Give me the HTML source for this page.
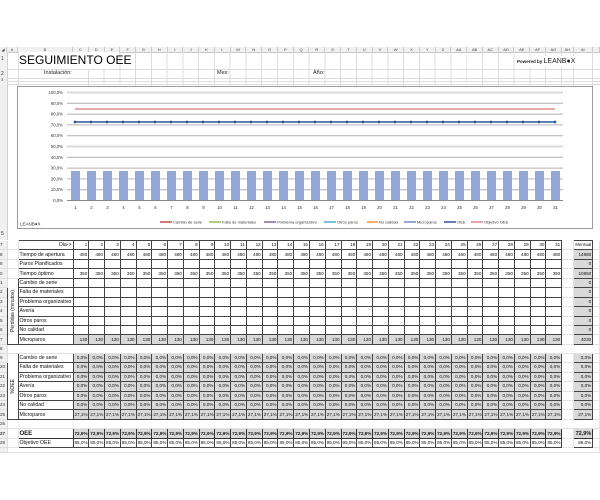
<!DOCTYPE html>
<html><head><meta charset="utf-8">
<style>
body{margin:0;width:600px;height:500px;position:relative;background:#fff;font-family:"Liberation Sans",sans-serif;overflow:hidden}
.abs{position:absolute}
.hdr{position:absolute;top:47px;left:0;width:600px;height:5px;background:#f0f0f0;border-bottom:1px solid #c8c8c8;font-size:4px;line-height:5px;color:#444;display:flex}
.hdr span{text-align:center;border-right:1px solid #c8c8c8;box-sizing:border-box;overflow:hidden}
table{position:absolute;left:0;top:240px;border-collapse:collapse;table-layout:fixed;width:600px}
td{padding:0 1px;font-size:4.6px;text-align:right;overflow:hidden;white-space:nowrap;line-height:8px;vertical-align:middle;border:1px solid #444;color:#111;box-sizing:border-box}
tr{height:9.45px}
td.n{border:none;border-bottom:1px solid #ddd;border-right:1px solid #ddd;background:#f0f0f0;font-size:4.5px;text-align:left;color:#333;padding:0}
td.e{border:none;border-bottom:1px solid #e2e2e2;border-right:1px solid #e2e2e2}
td.l{text-align:left;font-size:5.2px;border-right:1px solid #444}
td.g{background:#d9d9d9}
tr.t td.v{border:1.5px solid #333}
.vert{writing-mode:vertical-rl;transform:rotate(180deg);font-size:5px;text-align:center;margin:auto}
</style></head><body>

<div class="hdr">
<span style="width:7px">◢</span><span style="width:11px">A</span><span style="width:55px">B</span>
<span style="width:15.77px">C</span><span style="width:15.77px">D</span><span style="width:15.77px">E</span><span style="width:15.77px">F</span><span style="width:15.77px">G</span><span style="width:15.77px">H</span><span style="width:15.77px">I</span><span style="width:15.77px">J</span><span style="width:15.77px">K</span><span style="width:15.77px">L</span><span style="width:15.77px">M</span><span style="width:15.77px">N</span><span style="width:15.77px">O</span><span style="width:15.77px">P</span><span style="width:15.77px">Q</span><span style="width:15.77px">R</span><span style="width:15.77px">S</span><span style="width:15.77px">T</span><span style="width:15.77px">U</span><span style="width:15.77px">V</span><span style="width:15.77px">W</span><span style="width:15.77px">X</span><span style="width:15.77px">Y</span><span style="width:15.77px">Z</span><span style="width:15.77px">AA</span><span style="width:15.77px">AB</span><span style="width:15.77px">AC</span><span style="width:15.77px">AD</span><span style="width:15.77px">AE</span><span style="width:15.77px">AF</span><span style="width:15.77px">AG</span><span style="width:12px">AH</span><span style="width:19px">AI</span><span style="width:7px"></span>
</div>

<div class="abs" style="left:0;top:52px;width:7px;height:188px;background:#f0f0f0;border-right:1px solid #d0d0d0"></div>
<div class="abs" style="left:73px;top:52px;width:489px;height:34px;background:repeating-linear-gradient(to right,transparent 0 14.77px,#dcdcdc 14.77px 15.77px)"></div>
<div class="abs" style="left:18px;top:52px;width:1px;height:34px;background:#dcdcdc"></div>
<div class="abs" style="left:573px;top:52px;width:1px;height:34px;background:#dcdcdc"></div>
<div class="abs" style="left:592px;top:52px;width:1px;height:34px;background:#dcdcdc"></div>
<div class="abs" style="left:7px;top:69px;width:593px;height:1px;background:#dcdcdc"></div>
<div class="abs" style="left:7px;top:78px;width:593px;height:1px;background:#dcdcdc"></div>
<div class="abs" style="left:7px;top:81px;width:593px;height:1px;background:#dcdcdc"></div>
<div class="abs" style="left:7px;top:84px;width:593px;height:1px;background:#dcdcdc"></div>
<div class="abs" style="left:1px;top:56px;font-size:5px;color:#333">1</div>
<div class="abs" style="left:1px;top:71px;font-size:5px;color:#333">2</div>
<div class="abs" style="left:1px;top:77px;font-size:4px;color:#333">3</div>
<div class="abs" style="left:1px;top:231px;font-size:5px;color:#333">5</div>

<div class="abs" style="left:19px;top:52px;width:100px;height:17px;background:#fff;font-size:12px;line-height:17px;color:#000;white-space:nowrap">SEGUIMIENTO OEE</div>
<div class="abs" style="left:44px;top:70px;font-size:5.5px;color:#222">Instalación:</div>
<div class="abs" style="left:217px;top:70px;font-size:5.5px;color:#222">Mes:</div>
<div class="abs" style="left:313px;top:70px;font-size:5.5px;color:#222">Año:</div>
<div class="abs" style="left:517px;top:56px;width:64px;height:11px;background:#fff;font-size:4.5px;font-weight:bold;line-height:11px;color:#222;white-space:nowrap">Powered by <span style="font-size:7px;font-weight:normal;color:#222">LEANB●X</span></div>

<svg class="abs" style="left:0;top:0" width="600" height="240" viewBox="0 0 600 240">
<rect x="17.5" y="86.5" width="575" height="142" fill="#fff" stroke="#9a9a9a"/>
<g stroke-width="1">
<line x1="67" x2="563" y1="92.5" y2="92.5" stroke="#d9d9d9" stroke-width="2"/>
<line x1="67" x2="563" y1="103.3" y2="103.3" stroke="#b0b0b0"/>
<line x1="67" x2="563" y1="114.1" y2="114.1" stroke="#b0b0b0"/>
<line x1="67" x2="563" y1="124.9" y2="124.9" stroke="#b0b0b0"/>
<line x1="67" x2="563" y1="135.7" y2="135.7" stroke="#b0b0b0"/>
<line x1="67" x2="563" y1="146.5" y2="146.5" stroke="#d9d9d9" stroke-width="2"/>
<line x1="67" x2="563" y1="157.3" y2="157.3" stroke="#b0b0b0"/>
<line x1="67" x2="563" y1="168.1" y2="168.1" stroke="#b0b0b0"/>
<line x1="67" x2="563" y1="178.9" y2="178.9" stroke="#d9d9d9" stroke-width="2"/>
<line x1="67" x2="563" y1="189.7" y2="189.7" stroke="#b0b0b0"/>
</g>
<g fill="#93a9d4">
<rect x="71" y="171" width="9" height="29.5"/><rect x="87" y="171" width="9" height="29.5"/><rect x="103" y="171" width="9" height="29.5"/><rect x="119" y="171" width="9" height="29.5"/><rect x="135" y="171" width="9" height="29.5"/><rect x="151" y="171" width="9" height="29.5"/><rect x="167" y="171" width="9" height="29.5"/><rect x="183" y="171" width="9" height="29.5"/><rect x="199" y="171" width="9" height="29.5"/><rect x="215" y="171" width="9" height="29.5"/><rect x="231" y="171" width="9" height="29.5"/><rect x="247" y="171" width="9" height="29.5"/><rect x="263" y="171" width="9" height="29.5"/><rect x="279" y="171" width="9" height="29.5"/><rect x="295" y="171" width="9" height="29.5"/><rect x="311" y="171" width="9" height="29.5"/><rect x="327" y="171" width="9" height="29.5"/><rect x="343" y="171" width="9" height="29.5"/><rect x="359" y="171" width="9" height="29.5"/><rect x="375" y="171" width="9" height="29.5"/><rect x="391" y="171" width="9" height="29.5"/><rect x="407" y="171" width="9" height="29.5"/><rect x="423" y="171" width="9" height="29.5"/><rect x="439" y="171" width="9" height="29.5"/><rect x="455" y="171" width="9" height="29.5"/><rect x="471" y="171" width="9" height="29.5"/><rect x="487" y="171" width="9" height="29.5"/><rect x="503" y="171" width="9" height="29.5"/><rect x="519" y="171" width="9" height="29.5"/><rect x="535" y="171" width="9" height="29.5"/><rect x="551" y="171" width="9" height="29.5"/>
</g>
<line x1="67" x2="563" y1="200.5" y2="200.5" stroke="#888"/>
<line x1="75" x2="555" y1="109" y2="109" stroke="#d88c8a" stroke-width="1.5"/>
<line x1="75" x2="555" y1="122" y2="122" stroke="#2a5599" stroke-width="1.5"/>
<g fill="#2a5599">
<path id="dm" d="M75 120.3l1.7 1.7-1.7 1.7-1.7-1.7z"/>
<use href="#dm" x="16"/><use href="#dm" x="32"/><use href="#dm" x="48"/><use href="#dm" x="64"/><use href="#dm" x="80"/><use href="#dm" x="96"/><use href="#dm" x="112"/><use href="#dm" x="128"/><use href="#dm" x="144"/><use href="#dm" x="160"/><use href="#dm" x="176"/><use href="#dm" x="192"/><use href="#dm" x="208"/><use href="#dm" x="224"/><use href="#dm" x="240"/><use href="#dm" x="256"/><use href="#dm" x="272"/><use href="#dm" x="288"/><use href="#dm" x="304"/><use href="#dm" x="320"/><use href="#dm" x="336"/><use href="#dm" x="352"/><use href="#dm" x="368"/><use href="#dm" x="384"/><use href="#dm" x="400"/><use href="#dm" x="416"/><use href="#dm" x="432"/><use href="#dm" x="448"/><use href="#dm" x="464"/><use href="#dm" x="480"/>
</g>
<g font-family="Liberation Sans,sans-serif" font-size="4.3" fill="#333" text-anchor="end">
<text x="63" y="94">100,0%</text><text x="63" y="104.8">90,0%</text><text x="63" y="115.6">80,0%</text><text x="63" y="126.4">70,0%</text><text x="63" y="137.2">60,0%</text><text x="63" y="148">50,0%</text><text x="63" y="158.8">40,0%</text><text x="63" y="169.6">30,0%</text><text x="63" y="180.4">20,0%</text><text x="63" y="191.2">10,0%</text><text x="63" y="202">0,0%</text>
</g>
<g font-family="Liberation Sans,sans-serif" font-size="4.3" fill="#333" text-anchor="middle">
<text x="75.5" y="209">1</text><text x="91.5" y="209">2</text><text x="107.5" y="209">3</text><text x="123.5" y="209">4</text><text x="139.5" y="209">5</text><text x="155.5" y="209">6</text><text x="171.5" y="209">7</text><text x="187.5" y="209">8</text><text x="203.5" y="209">9</text><text x="219.5" y="209">10</text><text x="235.5" y="209">11</text><text x="251.5" y="209">12</text><text x="267.5" y="209">13</text><text x="283.5" y="209">14</text><text x="299.5" y="209">15</text><text x="315.5" y="209">16</text><text x="331.5" y="209">17</text><text x="347.5" y="209">18</text><text x="363.5" y="209">19</text><text x="379.5" y="209">20</text><text x="395.5" y="209">21</text><text x="411.5" y="209">22</text><text x="427.5" y="209">23</text><text x="443.5" y="209">24</text><text x="459.5" y="209">25</text><text x="475.5" y="209">26</text><text x="491.5" y="209">27</text><text x="507.5" y="209">28</text><text x="523.5" y="209">29</text><text x="539.5" y="209">30</text><text x="555.5" y="209">31</text>
</g>
<g stroke-width="1.5">
<line x1="160" x2="172" y1="222" y2="222" stroke="#c0504d"/>
<line x1="209" x2="221" y1="222" y2="222" stroke="#9bbb59"/>
<line x1="264" x2="276" y1="222" y2="222" stroke="#8064a2"/>
<line x1="324" x2="336" y1="222" y2="222" stroke="#4bacc6"/>
<line x1="367" x2="378" y1="222" y2="222" stroke="#f79646"/>
<line x1="404" x2="416" y1="222" y2="222" stroke="#93a9d4" stroke-width="2"/>
<line x1="444" x2="456" y1="222" y2="222" stroke="#2a5599"/>
<line x1="471" x2="483" y1="222" y2="222" stroke="#d88c8a"/>
</g>
<g font-family="Liberation Sans,sans-serif" font-size="4" fill="#333">
<text x="173" y="223.5">Cambio de serie</text><text x="222" y="223.5">Falta de materiales</text><text x="277" y="223.5">Problema organizativo</text><text x="337" y="223.5">Otros paros</text><text x="379" y="223.5">No calidad</text><text x="417" y="223.5">Microparos</text><text x="457" y="223.5">OEE</text><text x="484" y="223.5">Objetivo OEE</text>
<text x="20" y="225.5" font-size="4.5">LEANB●X</text>
</g>
</svg>

<table>
<colgroup><col style="width:7px"><col style="width:11px"><col style="width:55px">
<col style="width:15.77px"><col style="width:15.77px"><col style="width:15.77px"><col style="width:15.77px"><col style="width:15.77px"><col style="width:15.77px"><col style="width:15.77px"><col style="width:15.77px"><col style="width:15.77px"><col style="width:15.77px"><col style="width:15.77px"><col style="width:15.77px"><col style="width:15.77px"><col style="width:15.77px"><col style="width:15.77px"><col style="width:15.77px"><col style="width:15.77px"><col style="width:15.77px"><col style="width:15.77px"><col style="width:15.77px"><col style="width:15.77px"><col style="width:15.77px"><col style="width:15.77px"><col style="width:15.77px"><col style="width:15.77px"><col style="width:15.77px"><col style="width:15.77px"><col style="width:15.77px"><col style="width:15.77px"><col style="width:15.77px"><col style="width:15.77px">
<col style="width:12px"><col style="width:19px"><col style="width:7px"></colgroup>
<tr><td class="n">7</td><td class="e"></td><td style="font-size:5.2px">Dia-&gt;</td><td>1</td><td>2</td><td>3</td><td>4</td><td>5</td><td>6</td><td>7</td><td>8</td><td>9</td><td>10</td><td>11</td><td>12</td><td>13</td><td>14</td><td>15</td><td>16</td><td>17</td><td>18</td><td>19</td><td>20</td><td>21</td><td>22</td><td>23</td><td>24</td><td>25</td><td>26</td><td>27</td><td>28</td><td>29</td><td>30</td><td>31</td><td class="e"></td><td style="font-size:4.2px">Mensual</td><td class="e"></td></tr>
<tr><td class="n">8</td><td class="e"></td><td class="l">Tiempo de apertura</td><td>480</td><td>480</td><td>480</td><td>480</td><td>480</td><td>480</td><td>480</td><td>480</td><td>480</td><td>480</td><td>480</td><td>480</td><td>480</td><td>480</td><td>480</td><td>480</td><td>480</td><td>480</td><td>480</td><td>480</td><td>480</td><td>480</td><td>480</td><td>480</td><td>480</td><td>480</td><td>480</td><td>480</td><td>480</td><td>480</td><td>480</td><td class="e"></td><td class="g">14880</td><td class="e"></td></tr>
<tr><td class="n">9</td><td class="e"></td><td class="l">Paros Planificados</td><td></td><td></td><td></td><td></td><td></td><td></td><td></td><td></td><td></td><td></td><td></td><td></td><td></td><td></td><td></td><td></td><td></td><td></td><td></td><td></td><td></td><td></td><td></td><td></td><td></td><td></td><td></td><td></td><td></td><td></td><td></td><td class="e"></td><td class="g">0</td><td class="e"></td></tr>
<tr><td class="n">0</td><td class="e"></td><td class="l">Tiempo óptimo</td><td>350</td><td>350</td><td>350</td><td>350</td><td>350</td><td>350</td><td>350</td><td>350</td><td>350</td><td>350</td><td>350</td><td>350</td><td>350</td><td>350</td><td>350</td><td>350</td><td>350</td><td>350</td><td>350</td><td>350</td><td>350</td><td>350</td><td>350</td><td>350</td><td>350</td><td>350</td><td>350</td><td>350</td><td>350</td><td>350</td><td>350</td><td class="e"></td><td class="g">10850</td><td class="e"></td></tr>
<tr><td class="n">1</td><td rowspan="7" style="border:1.5px solid #444;padding:0"><div class="vert">Pérdidas (minutos)</div></td><td class="l">Cambio de serie</td><td></td><td></td><td></td><td></td><td></td><td></td><td></td><td></td><td></td><td></td><td></td><td></td><td></td><td></td><td></td><td></td><td></td><td></td><td></td><td></td><td></td><td></td><td></td><td></td><td></td><td></td><td></td><td></td><td></td><td></td><td></td><td class="e"></td><td class="g">0</td><td class="e"></td></tr>
<tr><td class="n">2</td><td class="l">Falta de materiales</td><td></td><td></td><td></td><td></td><td></td><td></td><td></td><td></td><td></td><td></td><td></td><td></td><td></td><td></td><td></td><td></td><td></td><td></td><td></td><td></td><td></td><td></td><td></td><td></td><td></td><td></td><td></td><td></td><td></td><td></td><td></td><td class="e"></td><td class="g">0</td><td class="e"></td></tr>
<tr><td class="n">3</td><td class="l">Problema organizativo</td><td></td><td></td><td></td><td></td><td></td><td></td><td></td><td></td><td></td><td></td><td></td><td></td><td></td><td></td><td></td><td></td><td></td><td></td><td></td><td></td><td></td><td></td><td></td><td></td><td></td><td></td><td></td><td></td><td></td><td></td><td></td><td class="e"></td><td class="g">0</td><td class="e"></td></tr>
<tr><td class="n">4</td><td class="l">Avería</td><td></td><td></td><td></td><td></td><td></td><td></td><td></td><td></td><td></td><td></td><td></td><td></td><td></td><td></td><td></td><td></td><td></td><td></td><td></td><td></td><td></td><td></td><td></td><td></td><td></td><td></td><td></td><td></td><td></td><td></td><td></td><td class="e"></td><td class="g">0</td><td class="e"></td></tr>
<tr><td class="n">5</td><td class="l">Otros paros</td><td></td><td></td><td></td><td></td><td></td><td></td><td></td><td></td><td></td><td></td><td></td><td></td><td></td><td></td><td></td><td></td><td></td><td></td><td></td><td></td><td></td><td></td><td></td><td></td><td></td><td></td><td></td><td></td><td></td><td></td><td></td><td class="e"></td><td class="g">0</td><td class="e"></td></tr>
<tr><td class="n">6</td><td class="l">No calidad</td><td></td><td></td><td></td><td></td><td></td><td></td><td></td><td></td><td></td><td></td><td></td><td></td><td></td><td></td><td></td><td></td><td></td><td></td><td></td><td></td><td></td><td></td><td></td><td></td><td></td><td></td><td></td><td></td><td></td><td></td><td></td><td class="e"></td><td class="g">0</td><td class="e"></td></tr>
<tr><td class="n">7</td><td class="l">Microparos</td><td class="g">130</td><td class="g">130</td><td class="g">130</td><td class="g">130</td><td class="g">130</td><td class="g">130</td><td class="g">130</td><td class="g">130</td><td class="g">130</td><td class="g">130</td><td class="g">130</td><td class="g">130</td><td class="g">130</td><td class="g">130</td><td class="g">130</td><td class="g">130</td><td class="g">130</td><td class="g">130</td><td class="g">130</td><td class="g">130</td><td class="g">130</td><td class="g">130</td><td class="g">130</td><td class="g">130</td><td class="g">130</td><td class="g">130</td><td class="g">130</td><td class="g">130</td><td class="g">130</td><td class="g">130</td><td class="g">130</td><td class="e"></td><td class="g">4030</td><td class="e"></td></tr>
<tr style="height:8px"><td class="n">8</td><td class="e" colspan="36"></td></tr>
<tr><td class="n">9</td><td rowspan="7" style="border:1.5px solid #444;padding:0"><div class="vert">%OEE</div></td><td class="l">Cambio de serie</td><td class="g">0,0%</td><td class="g">0,0%</td><td class="g">0,0%</td><td class="g">0,0%</td><td class="g">0,0%</td><td class="g">0,0%</td><td class="g">0,0%</td><td class="g">0,0%</td><td class="g">0,0%</td><td class="g">0,0%</td><td class="g">0,0%</td><td class="g">0,0%</td><td class="g">0,0%</td><td class="g">0,0%</td><td class="g">0,0%</td><td class="g">0,0%</td><td class="g">0,0%</td><td class="g">0,0%</td><td class="g">0,0%</td><td class="g">0,0%</td><td class="g">0,0%</td><td class="g">0,0%</td><td class="g">0,0%</td><td class="g">0,0%</td><td class="g">0,0%</td><td class="g">0,0%</td><td class="g">0,0%</td><td class="g">0,0%</td><td class="g">0,0%</td><td class="g">0,0%</td><td class="g">0,0%</td><td class="e"></td><td class="g">0,0%</td><td class="e"></td></tr>
<tr><td class="n">20</td><td class="l">Falta de materiales</td><td class="g">0,0%</td><td class="g">0,0%</td><td class="g">0,0%</td><td class="g">0,0%</td><td class="g">0,0%</td><td class="g">0,0%</td><td class="g">0,0%</td><td class="g">0,0%</td><td class="g">0,0%</td><td class="g">0,0%</td><td class="g">0,0%</td><td class="g">0,0%</td><td class="g">0,0%</td><td class="g">0,0%</td><td class="g">0,0%</td><td class="g">0,0%</td><td class="g">0,0%</td><td class="g">0,0%</td><td class="g">0,0%</td><td class="g">0,0%</td><td class="g">0,0%</td><td class="g">0,0%</td><td class="g">0,0%</td><td class="g">0,0%</td><td class="g">0,0%</td><td class="g">0,0%</td><td class="g">0,0%</td><td class="g">0,0%</td><td class="g">0,0%</td><td class="g">0,0%</td><td class="g">0,0%</td><td class="e"></td><td class="g">0,0%</td><td class="e"></td></tr>
<tr><td class="n">21</td><td class="l">Problema organizativo</td><td class="g">0,0%</td><td class="g">0,0%</td><td class="g">0,0%</td><td class="g">0,0%</td><td class="g">0,0%</td><td class="g">0,0%</td><td class="g">0,0%</td><td class="g">0,0%</td><td class="g">0,0%</td><td class="g">0,0%</td><td class="g">0,0%</td><td class="g">0,0%</td><td class="g">0,0%</td><td class="g">0,0%</td><td class="g">0,0%</td><td class="g">0,0%</td><td class="g">0,0%</td><td class="g">0,0%</td><td class="g">0,0%</td><td class="g">0,0%</td><td class="g">0,0%</td><td class="g">0,0%</td><td class="g">0,0%</td><td class="g">0,0%</td><td class="g">0,0%</td><td class="g">0,0%</td><td class="g">0,0%</td><td class="g">0,0%</td><td class="g">0,0%</td><td class="g">0,0%</td><td class="g">0,0%</td><td class="e"></td><td class="g">0,0%</td><td class="e"></td></tr>
<tr><td class="n">22</td><td class="l">Avería</td><td class="g">0,0%</td><td class="g">0,0%</td><td class="g">0,0%</td><td class="g">0,0%</td><td class="g">0,0%</td><td class="g">0,0%</td><td class="g">0,0%</td><td class="g">0,0%</td><td class="g">0,0%</td><td class="g">0,0%</td><td class="g">0,0%</td><td class="g">0,0%</td><td class="g">0,0%</td><td class="g">0,0%</td><td class="g">0,0%</td><td class="g">0,0%</td><td class="g">0,0%</td><td class="g">0,0%</td><td class="g">0,0%</td><td class="g">0,0%</td><td class="g">0,0%</td><td class="g">0,0%</td><td class="g">0,0%</td><td class="g">0,0%</td><td class="g">0,0%</td><td class="g">0,0%</td><td class="g">0,0%</td><td class="g">0,0%</td><td class="g">0,0%</td><td class="g">0,0%</td><td class="g">0,0%</td><td class="e"></td><td class="g">0,0%</td><td class="e"></td></tr>
<tr><td class="n">23</td><td class="l">Otros paros</td><td class="g">0,0%</td><td class="g">0,0%</td><td class="g">0,0%</td><td class="g">0,0%</td><td class="g">0,0%</td><td class="g">0,0%</td><td class="g">0,0%</td><td class="g">0,0%</td><td class="g">0,0%</td><td class="g">0,0%</td><td class="g">0,0%</td><td class="g">0,0%</td><td class="g">0,0%</td><td class="g">0,0%</td><td class="g">0,0%</td><td class="g">0,0%</td><td class="g">0,0%</td><td class="g">0,0%</td><td class="g">0,0%</td><td class="g">0,0%</td><td class="g">0,0%</td><td class="g">0,0%</td><td class="g">0,0%</td><td class="g">0,0%</td><td class="g">0,0%</td><td class="g">0,0%</td><td class="g">0,0%</td><td class="g">0,0%</td><td class="g">0,0%</td><td class="g">0,0%</td><td class="g">0,0%</td><td class="e"></td><td class="g">0,0%</td><td class="e"></td></tr>
<tr><td class="n">24</td><td class="l">No calidad</td><td class="g">0,0%</td><td class="g">0,0%</td><td class="g">0,0%</td><td class="g">0,0%</td><td class="g">0,0%</td><td class="g">0,0%</td><td class="g">0,0%</td><td class="g">0,0%</td><td class="g">0,0%</td><td class="g">0,0%</td><td class="g">0,0%</td><td class="g">0,0%</td><td class="g">0,0%</td><td class="g">0,0%</td><td class="g">0,0%</td><td class="g">0,0%</td><td class="g">0,0%</td><td class="g">0,0%</td><td class="g">0,0%</td><td class="g">0,0%</td><td class="g">0,0%</td><td class="g">0,0%</td><td class="g">0,0%</td><td class="g">0,0%</td><td class="g">0,0%</td><td class="g">0,0%</td><td class="g">0,0%</td><td class="g">0,0%</td><td class="g">0,0%</td><td class="g">0,0%</td><td class="g">0,0%</td><td class="e"></td><td class="g">0,0%</td><td class="e"></td></tr>
<tr><td class="n">25</td><td class="l">Microparos</td><td class="g">27,1%</td><td class="g">27,1%</td><td class="g">27,1%</td><td class="g">27,1%</td><td class="g">27,1%</td><td class="g">27,1%</td><td class="g">27,1%</td><td class="g">27,1%</td><td class="g">27,1%</td><td class="g">27,1%</td><td class="g">27,1%</td><td class="g">27,1%</td><td class="g">27,1%</td><td class="g">27,1%</td><td class="g">27,1%</td><td class="g">27,1%</td><td class="g">27,1%</td><td class="g">27,1%</td><td class="g">27,1%</td><td class="g">27,1%</td><td class="g">27,1%</td><td class="g">27,1%</td><td class="g">27,1%</td><td class="g">27,1%</td><td class="g">27,1%</td><td class="g">27,1%</td><td class="g">27,1%</td><td class="g">27,1%</td><td class="g">27,1%</td><td class="g">27,1%</td><td class="g">27,1%</td><td class="e"></td><td class="g">27,1%</td><td class="e"></td></tr>
<tr style="height:9.5px"><td class="n">26</td><td class="e" colspan="36"></td></tr>
<tr class="t" style="font-weight:bold"><td class="n">27</td><td class="e"></td><td class="l v" style="font-weight:bold;font-size:6px">OEE</td><td class="g v">72,9%</td><td class="g v">72,9%</td><td class="g v">72,9%</td><td class="g v">72,9%</td><td class="g v">72,9%</td><td class="g v">72,9%</td><td class="g v">72,9%</td><td class="g v">72,9%</td><td class="g v">72,9%</td><td class="g v">72,9%</td><td class="g v">72,9%</td><td class="g v">72,9%</td><td class="g v">72,9%</td><td class="g v">72,9%</td><td class="g v">72,9%</td><td class="g v">72,9%</td><td class="g v">72,9%</td><td class="g v">72,9%</td><td class="g v">72,9%</td><td class="g v">72,9%</td><td class="g v">72,9%</td><td class="g v">72,9%</td><td class="g v">72,9%</td><td class="g v">72,9%</td><td class="g v">72,9%</td><td class="g v">72,9%</td><td class="g v">72,9%</td><td class="g v">72,9%</td><td class="g v">72,9%</td><td class="g v">72,9%</td><td class="g v">72,9%</td><td class="e"></td><td class="g v" style="font-size:5.5px">72,9%</td><td class="e"></td></tr>
<tr><td class="n">28</td><td class="e"></td><td class="l">Objetivo OEE</td><td>85,0%</td><td>85,0%</td><td>85,0%</td><td>85,0%</td><td>85,0%</td><td>85,0%</td><td>85,0%</td><td>85,0%</td><td>85,0%</td><td>85,0%</td><td>85,0%</td><td>85,0%</td><td>85,0%</td><td>85,0%</td><td>85,0%</td><td>85,0%</td><td>85,0%</td><td>85,0%</td><td>85,0%</td><td>85,0%</td><td>85,0%</td><td>85,0%</td><td>85,0%</td><td>85,0%</td><td>85,0%</td><td>85,0%</td><td>85,0%</td><td>85,0%</td><td>85,0%</td><td>85,0%</td><td>85,0%</td><td class="e"></td><td>85,0%</td><td class="e"></td></tr>
<tr style="height:5px"><td class="n"></td><td class="e" colspan="36"></td></tr>
</table>
</body></html>
